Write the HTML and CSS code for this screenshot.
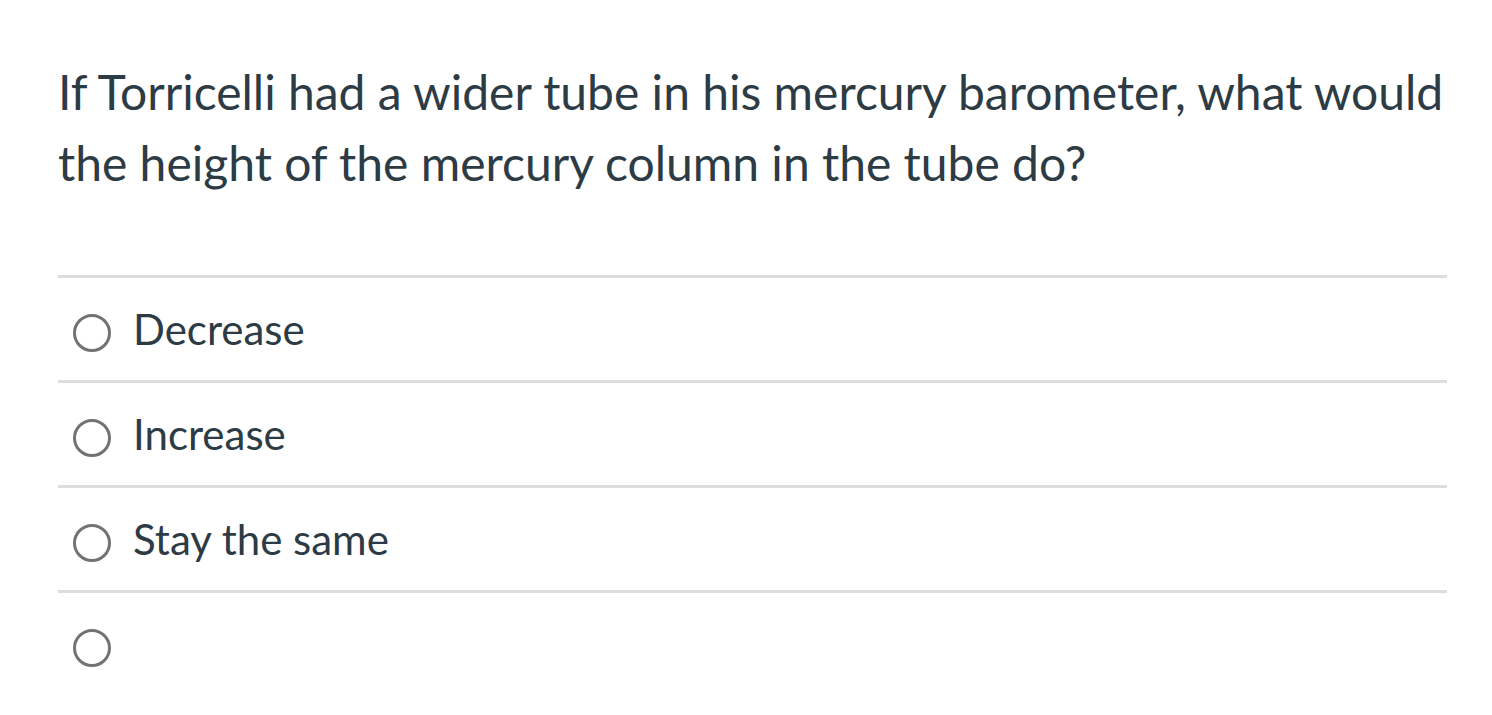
FILE: index.html
```html
<!DOCTYPE html>
<html lang="en">
<head>
<meta charset="utf-8">
<title>Question</title>
<link rel="stylesheet" href="styles.css">
</head>
<body>
<div class="quiz">
  <div class="question">If Torricelli had a wider tube in his mercury barometer, what would the height of the mercury column in the tube do?</div>
  <div class="answers">
    <label class="answer"><span class="radio"></span><span class="answer-text">Decrease</span></label>
    <label class="answer"><span class="radio"></span><span class="answer-text">Increase</span></label>
    <label class="answer"><span class="radio"></span><span class="answer-text">Stay the same</span></label>
    <label class="answer"><span class="radio"></span><span class="answer-text"></span></label>
  </div>
</div>
</body>
</html>
```
FILE: styles.css
```css
html, body {
  margin: 0;
  padding: 0;
  background: #ffffff;
}
body {
  font-family: "Lato", "Liberation Sans", sans-serif;
  color: #2d3b45;
}
.quiz {
  margin-left: 58px;
  width: 1389px;
  padding-top: 56px;
}
.question {
  font-size: 48px;
  line-height: 71px;
  margin-bottom: 77px;
}
.answers {
  display: flex;
  flex-direction: column;
}
.answer {
  display: flex;
  align-items: flex-start;
  border-top: 3px solid #dddddd;
  height: 102px;
  box-sizing: content-box;
}
.radio {
  flex: none;
  width: 32px;
  height: 32px;
  border: 3px solid #737373;
  border-radius: 50%;
  margin-top: 36px;
  margin-left: 15px;
  margin-right: 22px;
}
.answer-text {
  font-size: 42px;
  line-height: 48px;
  margin-top: 27px;
}
```
